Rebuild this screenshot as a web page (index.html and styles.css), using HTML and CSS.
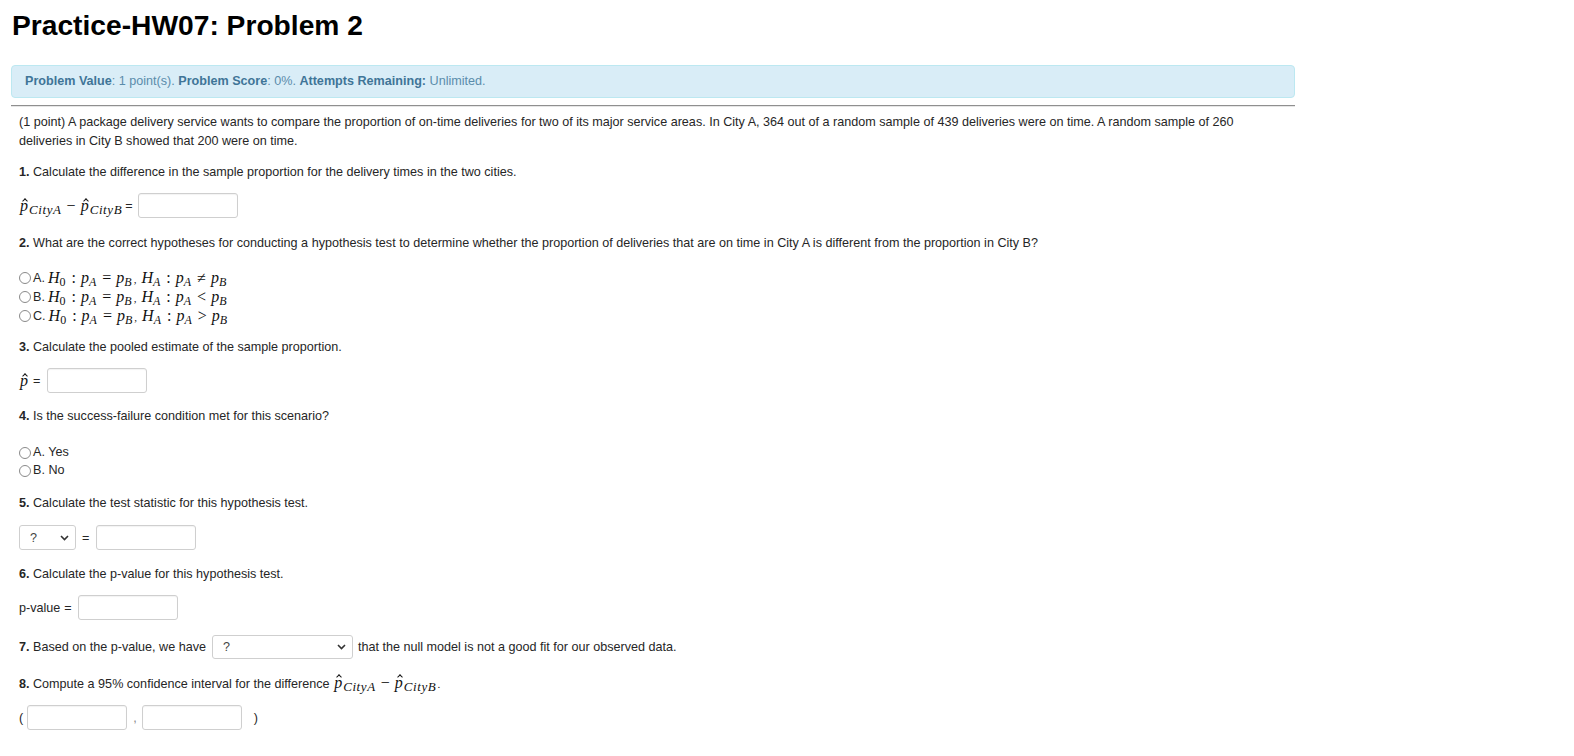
FILE: index.html
```html
<!DOCTYPE html>
<html lang="en">
<head>
    <meta charset="UTF-8">
    <title>Practice-HW07: Problem 2</title>
    <link rel="stylesheet" href="styles.css">
</head>
<body>
    <div class="page">
        <h1>Practice-HW07: Problem 2</h1>

        <div class="alert">
            <b>Problem Value</b>: 1 point(s). <b>Problem Score</b>: 0%. <b>Attempts Remaining:</b> Unlimited.
        </div>

        <hr class="rule">

        <div class="problem">
            <p class="txt intro">(1 point) A package delivery service wants to compare the proportion of on-time deliveries for two of its major service areas. In City A, 364 out of a random sample of 439 deliveries were on time. A random sample of 260 deliveries in City B showed that 200 were on time.</p>

            <p class="txt q1"><b>1.</b> Calculate the difference in the sample proportion for the delivery times in the two cities.</p>
            <div class="row r1">
                <span class="math"><span class="hat">p</span><span class="sub city">CityA</span><span class="op">&minus;</span><span class="hat">p</span><span class="sub city">CityB</span></span>
                <span class="eq">=</span>
                <span class="field"></span>
            </div>

            <p class="txt q2"><b>2.</b> What are the correct hypotheses for conducting a hypothesis test to determine whether the proportion of deliveries that are on time in City A is different from the proportion in City B?</p>
            <div class="choices hyp">
                <label class="choice"><span class="radio"></span>A. <span class="math mline"><i>H</i><span class="sub up">0</span><span class="op">:</span><i>p</i><span class="sub">A</span><span class="op">=</span><i>p</i><span class="sub">B</span><span class="comma">,</span><i>H</i><span class="sub">A</span><span class="op">:</span><i>p</i><span class="sub">A</span><span class="op">&ne;</span><i>p</i><span class="sub">B</span></span></label>
                <label class="choice"><span class="radio"></span>B. <span class="math mline"><i>H</i><span class="sub up">0</span><span class="op">:</span><i>p</i><span class="sub">A</span><span class="op">=</span><i>p</i><span class="sub">B</span><span class="comma">,</span><i>H</i><span class="sub">A</span><span class="op">:</span><i>p</i><span class="sub">A</span><span class="op">&lt;</span><i>p</i><span class="sub">B</span></span></label>
                <label class="choice"><span class="radio"></span>C. <span class="math mline"><i>H</i><span class="sub up">0</span><span class="op">:</span><i>p</i><span class="sub">A</span><span class="op">=</span><i>p</i><span class="sub">B</span><span class="comma">,</span><i>H</i><span class="sub">A</span><span class="op">:</span><i>p</i><span class="sub">A</span><span class="op">&gt;</span><i>p</i><span class="sub">B</span></span></label>
            </div>

            <p class="txt q3"><b>3.</b> Calculate the pooled estimate of the sample proportion.</p>
            <div class="row r3">
                <span class="math"><span class="hat">p</span></span>
                <span class="eq">=</span>
                <span class="field"></span>
            </div>

            <p class="txt q4"><b>4.</b> Is the success-failure condition met for this scenario?</p>
            <div class="choices yn">
                <label class="choice"><span class="radio"></span>A. Yes</label>
                <label class="choice"><span class="radio"></span>B. No</label>
            </div>

            <p class="txt q5"><b>5.</b> Calculate the test statistic for this hypothesis test.</p>
            <div class="row r5">
                <span class="select small"><span>?</span>
                    <svg width="9" height="6" viewBox="0 0 9 6"><path d="M1 1l3.5 3.5L8 1" fill="none" stroke="#333" stroke-width="1.6"/></svg>
                </span>
                <span class="eq">=</span>
                <span class="field"></span>
            </div>

            <p class="txt q6"><b>6.</b> Calculate the p-value for this hypothesis test.</p>
            <div class="row r6">
                <span>p-value</span>
                <span class="eq">=</span>
                <span class="field"></span>
            </div>

            <div class="row r7">
                <span><b>7.</b> Based on the p-value, we have</span>
                <span class="select wide"><span>?</span>
                    <svg width="9" height="6" viewBox="0 0 9 6"><path d="M1 1l3.5 3.5L8 1" fill="none" stroke="#333" stroke-width="1.6"/></svg>
                </span>
                <span>that the null model is not a good fit for our observed data.</span>
            </div>

            <p class="txt q8"><b>8.</b> Compute a 95% confidence interval for the difference <span class="math"><span class="hat">p</span><span class="sub city">CityA</span><span class="op">&minus;</span><span class="hat">p</span><span class="sub city">CityB</span><span class="dot">.</span></span></p>
            <div class="row r8">
                <span class="paren">(</span>
                <span class="field"></span>
                <span class="sep">,</span>
                <span class="field"></span>
                <span class="paren close">)</span>
            </div>
        </div>
    </div>
</body>
</html>
```

FILE: styles.css
```css
body {
    margin: 0;
    font-family: 'Liberation Sans', Arial, sans-serif;
    font-size: 12.6px;
    color: #262626;
    background: white;
}

.page {
    padding-left: 11px;
    width: 1284px;
}

h1 {
    margin: 9px 0 0;
    padding-left: 1px;
    font-size: 28.2px;
    line-height: 32px;
    font-weight: bold;
    color: #000;
}

.alert {
    margin-top: 24px;
    padding: 7px 13px;
    line-height: 17px;
    background: #d9edf7;
    border: 1px solid #bce8f1;
    border-radius: 4px;
    color: #5a8cab;
}

.alert b {
    color: #3f7597;
}

.rule {
    margin: 7px 0 0;
    border: 0;
    border-top: 1px solid #8f8f8f;
    border-bottom: 1px solid #e6e6e6;
    height: 0;
}

.problem {
    padding: 0 12px 0 8px;
}

.txt {
    margin: 0;
    line-height: 19px;
}

.intro { margin-top: 6px; }
.q1 { margin-top: 12px; }
.r1 { margin-top: 11px; }
.q2 { margin-top: 16px; }
.hyp { margin-top: 15px; }
.q3 { margin-top: 13px; }
.r3 { margin-top: 11px; }
.q4 { margin-top: 14px; }
.yn { margin-top: 17px; }
.q5 { margin-top: 15px; }
.r5 { margin-top: 12px; }
.q6 { margin-top: 15px; }
.r6 { margin-top: 11px; }
.r7 { margin-top: 15px; }
.q8 { margin-top: 14px; }
.r8 { margin-top: 11px; }

.row {
    display: flex;
    align-items: center;
    height: 25px;
}

.r7 { height: 24px; }

.field {
    display: inline-block;
    width: 100px;
    height: 25px;
    box-sizing: border-box;
    border: 1px solid #cfcfcf;
    border-radius: 3px;
    background: white;
    box-shadow: inset 0 1px 1px rgba(0,0,0,0.05);
}

.eq {
    margin: 0 4px;
}

.r1 .eq { margin: 0 5px 0 2px; }
.r3 .eq { margin: 0 7px 0 4px; }
.r5 .eq { margin: 0 7px 0 6px; }
.r6 .eq { margin: 0 6px 0 4px; }

.math {
    font-family: 'Liberation Serif', 'Times New Roman', serif;
    font-style: italic;
    font-size: 16px;
    color: #111;
    white-space: nowrap;
}

.math i {
    font-style: italic;
}

.hat {
    position: relative;
    display: inline-block;
    padding: 0 1px;
}

.hat::before {
    content: "";
    position: absolute;
    top: 2px;
    left: 4px;
    width: 3px;
    height: 3px;
    border-top: 1px solid #111;
    border-left: 1px solid #111;
    transform: rotate(45deg);
}

.sub {
    font-size: 12px;
    vertical-align: -3px;
    line-height: 0;
    margin-right: 1px;
}

.sub.city {
    font-size: 13px;
    letter-spacing: 0.6px;
}

.sub.up {
    font-style: normal;
}

.op {
    font-style: normal;
    margin: 0 5px;
}

.r1 .op, .q8 .op {
    margin: 0 4px;
}

.comma {
    font-style: normal;
    font-size: 11px;
    margin: 0 5px 0 1px;
}

.dot {
    font-style: normal;
    font-size: 11px;
}

.choices {
    display: flex;
    flex-direction: column;
}

.choice {
    display: flex;
    align-items: center;
    height: 19px;
}

.yn .choice {
    height: 18px;
}

.radio {
    display: inline-block;
    width: 12px;
    height: 12px;
    box-sizing: border-box;
    border: 1px solid #8a8a8a;
    border-radius: 50%;
    margin: 1px 2px 0 0;
    background: white;
}

.choice .mline {
    margin-left: 3px;
}

.select {
    display: inline-flex;
    align-items: center;
    justify-content: space-between;
    box-sizing: border-box;
    height: 25px;
    padding: 0 6px 0 10px;
    border: 1px solid #cfcfcf;
    border-radius: 3px;
    background: white;
    color: #444;
}

.select.small {
    width: 57px;
}

.select.wide {
    width: 141px;
    height: 24px;
    margin: 0 5px 0 6px;
}

.paren {
    margin: 0 4px 0 0;
}

.paren.close {
    margin: 0 0 0 12px;
}

.sep {
    margin: 0 5px 0 6px;
    color: #888;
}
```
